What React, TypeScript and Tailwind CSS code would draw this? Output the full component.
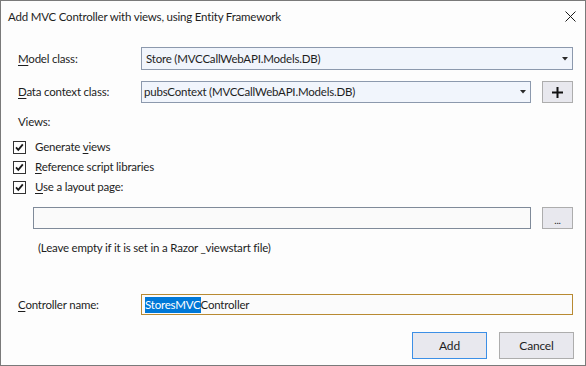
import React from "react";

const FONT = { fontFamily: '"Segoe UI", Lato, "Noto Sans", sans-serif' };

function Mn({ children }: { children: React.ReactNode }) {
  // mnemonic letter, underlined like in a Win32 dialog
  return <span className="underline underline-offset-2">{children}</span>;
}

function Check({ children }: { children: React.ReactNode }) {
  return (
    <div className="h-[20px] flex items-center pl-[12px]">
      <div className="w-[13px] h-[13px] border border-[#333333] bg-white flex items-center justify-center">
        <svg width="11" height="11" viewBox="0 0 11 11">
          <path d="M2 5.4 L4.3 7.8 L8.8 2.4" fill="none" stroke="#1a1a1a" strokeWidth="1.8" />
        </svg>
      </div>
      <span className="ml-[9px]">{children}</span>
    </div>
  );
}

function ComboArrow() {
  return (
    <div className="w-[14px] h-full flex items-center justify-center">
      <svg width="6" height="4" viewBox="0 0 6 4">
        <path d="M0 0 H6 L3 3.5 Z" fill="#2a2a2a" />
      </svg>
    </div>
  );
}

function Btn({ children, focus }: { children: React.ReactNode; focus?: boolean }) {
  return (
    <button
      className={`w-[75px] h-[27px] bg-[#e8e8ee] border text-[12px] text-[#1e1e1e] ${
        focus ? "border-[#3c8fe6]" : "border-[#adadad]"
      }`}
    >
      {children}
    </button>
  );
}

export default function App() {
  return (
    <div
      style={FONT}
      className="w-[586px] h-[366px] bg-[#fdfdfd] border border-[#7a7a7a] flex flex-col text-[11.5px] tracking-[-0.2px] text-[#1e1e1e] leading-[16px]"
    >
      <div className="h-[31px] flex items-center justify-between pl-[7px] pr-[9px]">
        <span>Add MVC Controller with views, using Entity Framework</span>
        <svg width="11" height="11" viewBox="0 0 11 11">
          <path d="M0.5 0.5 L10.5 10.5 M10.5 0.5 L0.5 10.5" stroke="#1a1a1a" strokeWidth="1" />
        </svg>
      </div>

      <div className="mt-[15px] flex items-center pl-[17px]">
        <span className="w-[123px]"><Mn>M</Mn>odel class:</span>
        <div className="w-[432px] h-[23px] border border-[#8c99ad] bg-[#f1f5fc] flex items-center">
          <span className="flex-1 pl-[4px]">Store (MVCCallWebAPI.Models.DB)</span>
          <ComboArrow />
        </div>
      </div>

      <div className="mt-[11px] flex items-center pl-[17px]">
        <span className="w-[123px]"><Mn>D</Mn>ata context class:</span>
        <div className="w-[390px] h-[22px] border border-[#8c99ad] bg-[#f1f5fc] flex items-center">
          <span className="flex-1 pl-[2px]">pubsContext (MVCCallWebAPI.Models.DB)</span>
          <ComboArrow />
        </div>
        <button className="ml-[11px] w-[31px] h-[22px] bg-[#e8e8ee] border border-[#adadad] flex items-center justify-center">
          <svg width="11" height="11" viewBox="0 0 11 11">
            <path d="M5.5 0 V11 M0 5.5 H11" stroke="#111111" strokeWidth="2" />
          </svg>
        </button>
      </div>

      <div className="mt-[11px] pl-[17px]">Views:</div>

      <div className="mt-[7px] flex flex-col">
        <Check>Generate <Mn>v</Mn>iews</Check>
        <Check><Mn>R</Mn>eference script libraries</Check>
        <Check><Mn>U</Mn>se a layout page:</Check>
      </div>

      <div className="mt-[10px] flex items-center pl-[32px]">
        <div className="w-[498px] h-[22px] border border-[#7f8a99] bg-[#fafafa]" />
        <button className="ml-[11px] w-[31px] h-[22px] bg-[#e8e8ee] border border-[#adadad] flex items-end justify-center pb-[3px] text-[10px] leading-[10px]">
          ...
        </button>
      </div>

      <div className="mt-[11px] pl-[37px]">(Leave empty if it is set in a Razor _viewstart file)</div>

      <div className="mt-[38px] flex items-center pl-[17px]">
        <span className="w-[123px]"><Mn>C</Mn>ontroller name:</span>
        <div className="w-[432px] h-[21px] border border-[#b88a32] bg-[#fbfbfb] flex items-center pl-[3px]">
          <span className="bg-[#0078d7] text-white">StoresMVC</span>
          <span>Controller</span>
        </div>
      </div>

      <div className="mt-[17px] flex justify-end gap-[12px] pr-[11px]">
        <Btn focus>Add</Btn>
        <Btn>Cancel</Btn>
      </div>
    </div>
  );
}
